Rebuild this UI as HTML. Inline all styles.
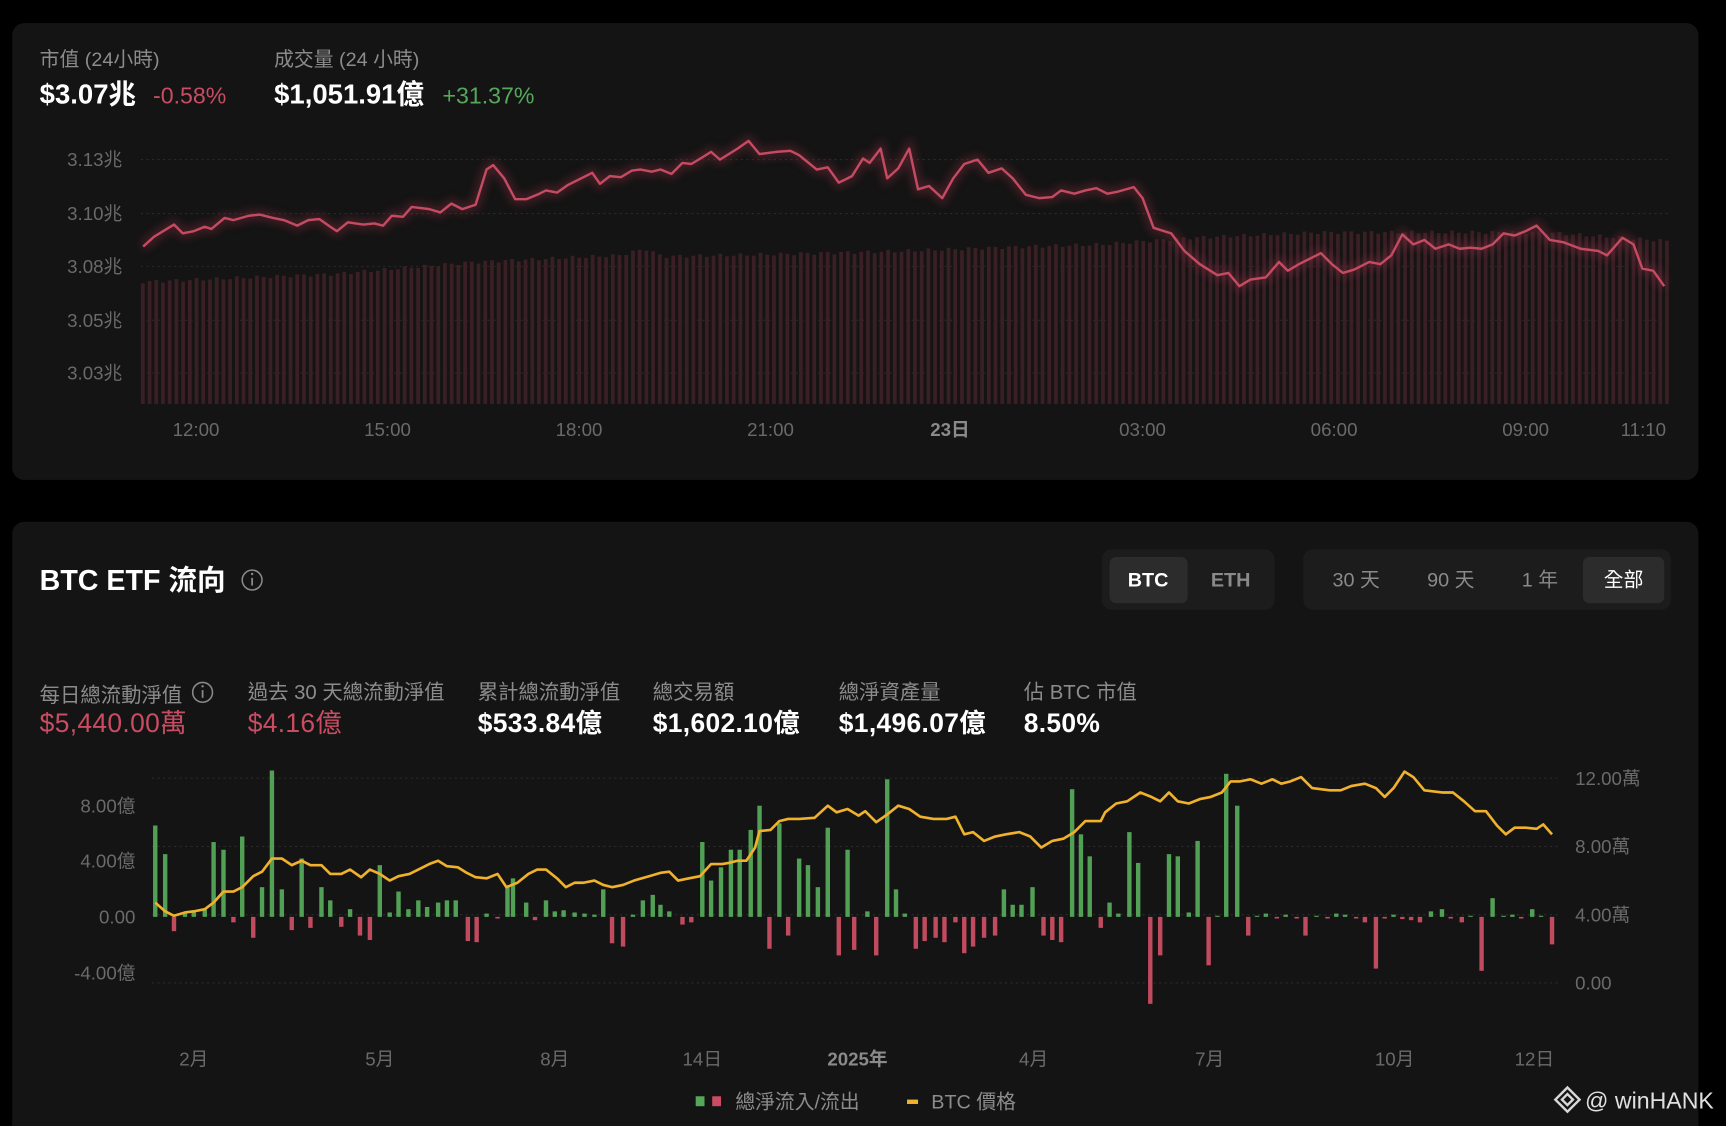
<!DOCTYPE html>
<html><head><meta charset="utf-8"><style>
html,body{margin:0;padding:0;background:#000;width:1726px;height:1126px;overflow:hidden}
svg{display:block}
text{font-family:"Liberation Sans","Noto Sans CJK TC",sans-serif}
</style></head><body>
<svg id="s" width="1726" height="1126" viewBox="0 0 1568 1023" xmlns="http://www.w3.org/2000/svg">
<defs><filter id="gl" x="-5%" y="-50%" width="110%" height="200%"><feGaussianBlur stdDeviation="4"/></filter></defs>
<rect width="1568" height="1023" fill="#000"/>
<rect x="11" y="21" width="1532" height="415" rx="11" fill="#141414"/>
<rect x="11" y="474" width="1532" height="560" rx="11" fill="#141414"/>

<!-- top header -->
<text x="36" y="60" font-size="18" fill="#8c8c8c">市值 (24小時)</text>
<text x="36" y="94" font-size="25" font-weight="bold" fill="#fff">$3.07兆</text>
<text x="139" y="94" font-size="21" fill="#c94c62">-0.58%</text>
<text x="249" y="60" font-size="18" fill="#8c8c8c">成交量 (24 小時)</text>
<text x="249" y="94" font-size="25" font-weight="bold" fill="#fff">$1,051.91億</text>
<text x="402" y="94" font-size="21" fill="#55a85a">+31.37%</text>

<g font-size="17" fill="#6a6a6a" text-anchor="end">
<text x="111" y="151">3.13兆</text><text x="111" y="200">3.10兆</text><text x="111" y="248">3.08兆</text><text x="111" y="297">3.05兆</text><text x="111" y="345">3.03兆</text>
</g>
<g stroke="#2a2a2a" stroke-dasharray="2 3" stroke-width="1">
<line x1="128" y1="145" x2="1515" y2="145"/><line x1="128" y1="194" x2="1515" y2="194"/><line x1="128" y1="242" x2="1515" y2="242"/><line x1="128" y1="291" x2="1515" y2="291"/><line x1="128" y1="339" x2="1515" y2="339"/>
</g>
<g id="tb" fill="#3a1f25"></g>
<polyline id="tl" fill="none" stroke="#c44b62" stroke-width="2.2" stroke-linejoin="round"/>
<g font-size="17" fill="#6a6a6a" text-anchor="middle">
<text x="178" y="396">12:00</text><text x="352" y="396">15:00</text><text x="526" y="396">18:00</text><text x="700" y="396">21:00</text><text x="863" y="396" font-weight="bold" fill="#8a8a8a">23日</text><text x="1038" y="396">03:00</text><text x="1212" y="396">06:00</text><text x="1386" y="396">09:00</text><text x="1493" y="396">11:10</text>
</g>

<!-- ETF card -->
<text x="36" y="536" font-size="26" font-weight="bold" fill="#fff">BTC ETF 流向</text>
<circle cx="229" cy="527" r="9" fill="none" stroke="#8a8a8a" stroke-width="1.4"/>
<line x1="229" y1="525" x2="229" y2="532" stroke="#8a8a8a" stroke-width="1.6"/><circle cx="229" cy="521.5" r="1.1" fill="#8a8a8a"/>

<rect x="1001" y="499" width="157" height="55" rx="9" fill="#1c1c1c"/>
<rect x="1008" y="506" width="71" height="42" rx="6" fill="#2c2c2c"/>
<text x="1043" y="533" font-size="18" font-weight="bold" fill="#fff" text-anchor="middle">BTC</text>
<text x="1118" y="533" font-size="18" font-weight="bold" fill="#8a8a8a" text-anchor="middle">ETH</text>
<rect x="1184" y="499" width="334" height="55" rx="9" fill="#1c1c1c"/>
<rect x="1438" y="506" width="74" height="42" rx="6" fill="#2c2c2c"/>
<g font-size="18" text-anchor="middle" fill="#8a8a8a">
<text x="1232" y="533">30 天</text><text x="1318" y="533">90 天</text><text x="1399" y="533">1 年</text><text x="1475" y="533" fill="#fff">全部</text>
</g>

<g font-size="18.5" fill="#8c8c8c">
<text x="36" y="638">每日總流動淨值</text><text x="225" y="635">過去 30 天總流動淨值</text><text x="434" y="635">累計總流動淨值</text><text x="593" y="635">總交易額</text><text x="762" y="635">總淨資產量</text><text x="930" y="635">佔 BTC 市值</text>
</g>
<circle cx="184" cy="629" r="9" fill="none" stroke="#8a8a8a" stroke-width="1.4"/>
<line x1="184" y1="627" x2="184" y2="634" stroke="#8a8a8a" stroke-width="1.6"/><circle cx="184" cy="623.5" r="1.1" fill="#8a8a8a"/>
<g font-size="24" font-weight="bold" fill="#fff" letter-spacing="0.3">
<text x="36" y="665" fill="#c94c62" font-weight="normal">$5,440.00萬</text><text x="225" y="665" fill="#c94c62" font-weight="normal">$4.16億</text><text x="434" y="665">$533.84億</text><text x="593" y="665">$1,602.10億</text><text x="762" y="665">$1,496.07億</text><text x="930" y="665">8.50%</text>
</g>

<g stroke="#2a2a2a" stroke-dasharray="2 3" stroke-width="1">
<line x1="138" y1="707" x2="1415" y2="707"/><line x1="138" y1="769" x2="1415" y2="769"/><line x1="138" y1="831" x2="1415" y2="831"/><line x1="138" y1="893" x2="1415" y2="893"/>
</g>
<g font-size="17" fill="#6a6a6a" text-anchor="end">
<text x="123" y="738">8.00億</text><text x="123" y="788">4.00億</text><text x="123" y="839">0.00</text><text x="123" y="890">-4.00億</text>
</g>
<g font-size="17" fill="#6a6a6a">
<text x="1431" y="713">12.00萬</text><text x="1431" y="775">8.00萬</text><text x="1431" y="837">4.00萬</text><text x="1431" y="899">0.00</text>
</g>
<g id="eb"></g>
<polyline id="yl" fill="none" stroke="#f0b12c" stroke-width="2.4" stroke-linejoin="round"/>
<g font-size="17" fill="#6a6a6a" text-anchor="middle">
<text x="176" y="968">2月</text><text x="345" y="968">5月</text><text x="504" y="968">8月</text><text x="638" y="968">14日</text><text x="779" y="968" font-weight="bold" fill="#8a8a8a">2025年</text><text x="939" y="968">4月</text><text x="1099" y="968">7月</text><text x="1267" y="968">10月</text><text x="1394" y="968">12日</text>
</g>
<rect x="632" y="996" width="8" height="9" fill="#55a85a"/><rect x="647" y="996" width="8" height="9" fill="#c94c62"/>
<text x="668" y="1007" font-size="18" fill="#8c8c8c">總淨流入/流出</text>
<rect x="824" y="999" width="10" height="4" fill="#f0b12c"/>
<text x="846" y="1007" font-size="18" fill="#8c8c8c">BTC 價格</text>
<g fill="none" stroke="#d8d8d8" stroke-width="2.2">
<path d="M1424 988 L1435 999 L1424 1010 L1413 999 Z"/><path d="M1424 994 L1429 999 L1424 1004 L1419 999 Z"/>
</g>
<text x="1440" y="1007" font-size="21" fill="#e0e0e0">@ winHANK</text>
</svg>
<script>
var NS="http://www.w3.org/2000/svg",s=document.getElementById('s');
function el(p,t,a){var e=document.createElementNS(NS,t);for(var k in a)e.setAttribute(k,a[k]);p.appendChild(e);return e}
var tk=[[128,256],[300,249],[430,238],[560,232],[585,226],[600,233],[700,231],[820,228],[900,225],[1000,222],[1080,216],[1200,211],[1400,211],[1515,219]];
function interp(x,arr){for(var i=0;i<arr.length-1;i++){if(x<=arr[i+1][0]){var a=arr[i],b=arr[i+1];return a[1]+(b[1]-a[1])*(x-a[0])/(b[0]-a[0]);}}return arr[arr.length-1][1]}
var tb=document.getElementById('tb');
for(var x=128;x<1515;x+=6.1){var y=interp(x,tk)+Math.sin(x*0.7)*1.5;el(tb,'rect',{x:x.toFixed(1),y:y.toFixed(1),width:3.4,height:(367-y).toFixed(1)})}
var tl="130,224 140,215 158,204 166,212 176,210 186,206 192,208 204,198 212,200 226,196 236,195 248,198 258,200 270,205 280,200 290,199 300,206 306,210 316,202 330,204 340,203 348,205 356,196 366,197 374,188 390,190 400,193 410,185 420,190 432,186 442,154 448,150 458,162 468,181 478,181 490,176 496,173 506,175 516,168 528,162 538,157 545,167 554,160 564,161 574,155 582,154 592,156 600,154 610,158 620,148 628,149 638,143 646,138 654,145 670,135 680,128 690,140 705,138 718,137 726,141 742,154 752,152 762,166 774,160 784,144 790,148 800,135 806,162 816,153 826,135 834,172 844,169 856,180 866,162 876,149 888,145 898,157 910,153 920,162 932,177 944,180 956,179 964,173 976,176 986,173 996,171 1006,176 1016,174 1030,170 1038,180 1048,207 1064,212 1076,228 1090,240 1106,250 1116,248 1126,260 1136,254 1150,252 1162,238 1170,246 1180,240 1200,230 1210,240 1220,248 1230,245 1244,238 1254,240 1264,232 1274,213 1284,222 1294,218 1304,226 1316,222 1326,226 1336,225 1346,226 1356,222 1366,212 1376,214 1386,210 1396,205 1408,218 1420,220 1436,226 1452,228 1460,232 1474,216 1484,222 1492,244 1502,246 1512,260";
var g=el(s,'polyline',{points:tl,fill:'none',stroke:'#7a2a3a','stroke-width':8,opacity:0.5,filter:'url(#gl)'});
s.insertBefore(g,document.getElementById('tl'));
document.getElementById('tl').setAttribute('points',tl);
var bars=[[141,750],[150,776],[158,846],[168,830],[176,828],[186,826],[194,765],[203,772],[212,838],[220,760],[230,852],[238,806],[247,700],[256,808],[265,845],[274,780],[282,843],[292,806],[300,818],[310,842],[318,826],[327,850],[336,854],[345,786],[354,829],[362,810],[371,826],[380,818],[388,824],[398,820],[406,818],[414,818],[425,855],[433,856],[442,830],[452,834],[461,805],[466,798],[478,820],[486,836],[496,818],[504,828],[512,827],[522,829],[531,830],[540,831],[548,808],[556,857],[566,860],[575,831],[584,818],[593,813],[600,822],[608,828],[620,840],[628,838],[638,765],[646,800],[655,788],[664,772],[672,772],[682,754],[690,732],[699,862],[708,748],[716,850],[726,780],[734,786],[743,806],[752,752],[762,868],[770,772],[776,863],[788,828],[796,868],[806,708],[814,808],[822,830],[832,862],[840,855],[850,852],[858,856],[868,838],[876,866],[884,860],[894,852],[904,850],[912,808],[920,822],[928,822],[938,806],[948,850],[956,854],[964,856],[974,717],[982,758],[990,778],[1000,843],[1008,820],[1016,830],[1026,756],[1034,784],[1045,912],[1054,868],[1062,776],[1070,778],[1080,829],[1088,764],[1098,877],[1106,832],[1114,703],[1124,732],[1134,850],[1142,832],[1150,830],[1160,834],[1168,831],[1178,834],[1186,850],[1196,832],[1206,834],[1214,830],[1222,831],[1232,834],[1240,838],[1250,880],[1258,834],[1266,831],[1274,835],[1282,836],[1290,838],[1300,828],[1310,826],[1318,834],[1328,838],[1336,832],[1346,882],[1356,816],[1366,832],[1374,831],[1382,834],[1392,826],[1400,832],[1410,858]];
var eb=document.getElementById('eb');
bars.forEach(function(b){var y=b[1],z=833;if(y<z)el(eb,'rect',{x:b[0]-2,y:y,width:4,height:z-y,fill:'#52a055'});else el(eb,'rect',{x:b[0]-2,y:z,width:4,height:Math.max(y-z,1.5),fill:'#c04a5e'})});
document.getElementById('yl').setAttribute('points',"141,820 150,828 158,832 168,829 176,828 186,826 194,820 203,810 212,810 220,806 230,796 238,792 247,780 256,780 265,786 274,782 282,786 292,786 300,794 310,794 318,790 328,797 336,790 345,794 354,800 362,796 372,794 380,790 390,785 398,782 406,787 416,788 424,793 432,797 442,798 452,794 460,806 470,802 480,794 488,790 496,790 506,798 514,806 522,802 530,802 540,800 548,804 556,806 566,804 576,800 590,796 600,793 608,792 616,800 626,798 636,796 646,785 656,785 662,784 670,782 678,782 686,770 690,755 700,754 708,746 716,744 726,744 740,743 752,732 760,738 770,735 780,741 786,737 796,747 806,740 816,732 826,735 836,742 848,744 860,744 868,742 876,758 884,756 894,764 904,760 914,758 926,756 936,760 946,770 956,764 966,762 976,756 986,746 1000,746 1004,738 1014,730 1024,728 1036,720 1046,724 1054,728 1062,720 1070,728 1080,730 1090,726 1100,724 1110,720 1118,710 1126,710 1136,708 1146,712 1156,708 1164,712 1172,710 1182,706 1192,716 1208,718 1218,718 1228,714 1240,712 1250,716 1258,724 1266,716 1276,701 1284,706 1294,718 1310,720 1320,720 1330,728 1340,737 1350,737 1360,750 1368,758 1376,752 1386,752 1396,753 1402,749 1410,758");
</script>
</body></html>
